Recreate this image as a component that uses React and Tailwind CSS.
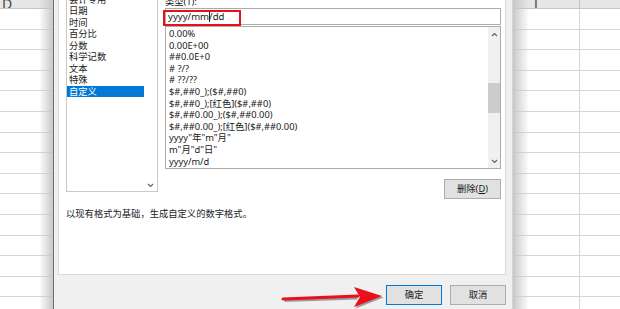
import React from "react";

const categories = ["货币", "会计专用", "日期", "时间", "百分比", "分数", "科学记数", "文本", "特殊", "自定义"];

const formats = [
  "0.00%",
  "0.00E+00",
  "##0.0E+0",
  "# ?/?",
  "# ??/??",
  "$#,##0_);($#,##0)",
  "$#,##0_);[红色]($#,##0)",
  "$#,##0.00_);($#,##0.00)",
  "$#,##0.00_);[红色]($#,##0.00)",
  'yyyy"年"m"月"',
  'm"月"d"日"',
  "yyyy/m/d",
];

const rows = Array.from({ length: 15 });

const Chevron = ({ up }) => (
  <svg width="7" height="5" viewBox="0 0 7 5" className="block">
    <path d={up ? "M1 4 L3.5 1.5 L6 4" : "M1 1 L3.5 3.5 L6 1"} fill="none" stroke="#606060" strokeWidth="1.1" />
  </svg>
);

const SheetStrip = ({ letter, letterClass, divider, shadowClass }) => (
  <div className="relative h-full overflow-hidden bg-white">
    <div className="flex h-[9px] border-b border-[#c4c4c4] bg-[#e6e6e6] overflow-hidden">
      <div className={`flex items-end text-[14px] leading-[9px] text-[#444] ${letterClass}`}>{letter}</div>
      {divider && <div className="ml-auto w-[41px] border-l border-[#c4c4c4]" />}
    </div>
    {rows.map((_, i) => (
      <div key={i} className="flex h-[20.6px] border-b border-[#d6d6d6]">
        {divider && <div className="ml-auto w-[41px] border-l border-[#d6d6d6]" />}
      </div>
    ))}
    <div className={`absolute top-0 bottom-0 ${shadowClass}`} />
  </div>
);

const App = () => {
  return (
    <div className="relative flex w-[620px] h-[309px] overflow-hidden bg-white font-['Noto_Sans','Noto_Sans_CJK_SC',sans-serif] text-[#1a1a1a]">
      {/* left part of the sheet */}
      <div className="w-[53px] shrink-0">
        <SheetStrip
          letter="D"
          letterClass="pl-[2px]"
          shadowClass="right-0 w-[14px] bg-gradient-to-r from-white/0 to-[#c8c8c8]"
        />
      </div>

      {/* dialog */}
      <div className="w-[460px] shrink-0 -mt-[20px] h-[329px] flex flex-col border-l border-[#6e6e6e] bg-[#f0f0f0] pl-[4px] pr-[7px] border-r border-r-[#d2d2d2]">
        <div className="h-[295px] w-[448px] flex flex-col border border-[#dadada] bg-white">
          <div className="flex">
            {/* category list */}
            <div className="ml-[7px] w-[92px] h-[211px] flex border border-[#c9c9c9] bg-white">
              <div className="w-[77px] flex flex-col text-[9.3px] leading-[11.5px]">
                {categories.map((c) => (
                  <div
                    key={c}
                    className={`h-[11.5px] pl-[2px] ${c === "自定义" ? "bg-[#0078d7] text-white" : ""}`}
                  >
                    {c}
                  </div>
                ))}
              </div>
              <div className="flex-1 flex flex-col items-center justify-end pb-[3px]">
                <Chevron />
              </div>
            </div>

            {/* type + format list */}
            <div className="ml-[7px] w-[336px] pt-[15px] flex flex-col">
              <div className="h-[12px] text-[9.3px] leading-[12px]">类型(T):</div>
              <div className="relative h-[17px] border border-[#acacac] bg-white pl-[2px] text-[9.6px] leading-[15px]">
                <span>yyyy/mm</span>
                <span className="inline-block w-px h-[10px] bg-[#222] align-middle -mx-[0.5px]" />
                <span>/dd</span>
                <div className="absolute -left-[3px] top-[1px] w-[78px] h-[16px] border-[2.5px] border-[#e8101b]" />
              </div>
              <div className="mt-[1px] h-[143px] flex border border-[#acacac] bg-white">
                <div className="flex-1 pt-[1px] pl-[3px] text-[9.3px] leading-[11.6px] whitespace-nowrap">
                  {formats.map((f) => (
                    <div key={f} className="h-[11.6px]">
                      {f}
                    </div>
                  ))}
                </div>
                <div className="w-[12px] bg-[#f0f0f0] flex flex-col items-center">
                  <div className="h-[14px] flex items-center">
                    <Chevron up />
                  </div>
                  <div className="mt-[42px] h-[30px] w-full bg-[#cdcdcd]" />
                  <div className="mt-auto h-[14px] flex items-center">
                    <Chevron />
                  </div>
                </div>
              </div>
              <button className="self-end mt-[10px] h-[20px] w-[57px] border border-[#adadad] bg-[#e1e1e1] text-[9.3px] leading-[18px] text-[#1a1a1a]">
                删除(<span className="underline">D</span>)
              </button>
            </div>
          </div>
          <div className="ml-[7px] mt-[9px] text-[9.3px] leading-[12px]">以现有格式为基础，生成自定义的数字格式。</div>
        </div>

        {/* footer buttons */}
        <div className="mt-[10px] flex justify-end gap-[8px] -mr-[1px]">
          <button className="h-[20px] w-[56px] border border-[#0078d7] bg-[#e1e1e1] text-[9.3px] leading-[18px] text-[#1a1a1a]">
            确定
          </button>
          <button className="h-[20px] w-[56px] border border-[#adadad] bg-[#e1e1e1] text-[9.3px] leading-[18px] text-[#1a1a1a]">
            取消
          </button>
        </div>
      </div>

      {/* right part of the sheet */}
      <div className="flex-1">
        <SheetStrip
          letter="J"
          letterClass="pl-[21px]"
          divider
          shadowClass="left-0 w-[16px] bg-gradient-to-r from-[#c8c8c8] to-white/0"
        />
      </div>

      {/* red arrow annotation */}
      <svg className="absolute left-[280px] top-[283px]" width="106" height="26" viewBox="0 0 106 26">
        <g transform="translate(1.5 1.5)" opacity="0.35">
          <path d="M3 16 L76 13.5" stroke="#000" strokeWidth="3" fill="none" />
          <path d="M74 4 L102 13 L74 24 L80 14 Z" fill="#000" />
        </g>
        <path d="M3 16 L78 13" stroke="#e8101b" strokeWidth="3" strokeLinecap="round" fill="none" />
        <path d="M74 4 L102 13 L74 24 L80 14 Z" fill="#e8101b" />
      </svg>
    </div>
  );
};

export default App;
